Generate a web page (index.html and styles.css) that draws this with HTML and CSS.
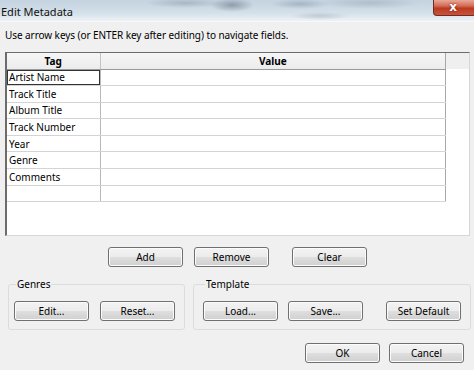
FILE: index.html
```html
<!DOCTYPE html>
<html>
<head>
	<meta charset="utf-8">
	<title>Edit Metadata</title>
	<link rel="stylesheet" href="styles.css">
</head>
<body>
	<div id="dialog">
		<div class="titlebar">
			<span class="title">Edit Metadata</span>
			<a class="close" href="javascript:;">x</a>
		</div>
		<p class="hint">Use arrow keys (or ENTER key after editing) to navigate fields.</p>
		<div class="pane">
			<table class="grid">
				<thead>
					<tr><th class="tag">Tag</th><th>Value</th></tr>
				</thead>
				<tbody>
					<tr><td class="sel">Artist Name</td><td></td></tr>
					<tr><td>Track Title</td><td></td></tr>
					<tr><td>Album Title</td><td></td></tr>
					<tr><td>Track Number</td><td></td></tr>
					<tr><td>Year</td><td></td></tr>
					<tr><td>Genre</td><td></td></tr>
					<tr><td>Comments</td><td></td></tr>
					<tr><td></td><td></td></tr>
				</tbody>
			</table>
		</div>
		<div class="row-btns">
			<button class="btn add">Add</button>
			<button class="btn remove">Remove</button>
			<button class="btn clear">Clear</button>
		</div>
		<div class="groups">
			<fieldset class="group genres">
				<legend>Genres</legend>
				<button class="btn">Edit...</button>
				<button class="btn">Reset...</button>
			</fieldset>
			<fieldset class="group template">
				<legend>Template</legend>
				<button class="btn">Load...</button>
				<button class="btn save">Save...</button>
				<button class="btn setdef">Set Default</button>
			</fieldset>
		</div>
		<div class="footer">
			<button class="btn">OK</button>
			<button class="btn cancel">Cancel</button>
		</div>
	</div>
</body>
</html>
```

FILE: styles.css
```css
*{margin: 0;padding: 0;box-sizing: border-box;}
html,body {
	width: 474px;
	height: 370px;
	overflow: hidden;
	background: #f0f0f0;
}
body {
	font: 10px/1.2 "Noto Sans", "Liberation Sans", sans-serif;
	color: #000;
}
#dialog {
	width: 474px;
	height: 370px;
}
.titlebar {
	height: 22px;
	display: flex;
	align-items: flex-start;
	background:
		radial-gradient(ellipse 22px 7px at 232px 5px, rgba(70,85,100,.45), transparent),
		radial-gradient(ellipse 40px 5px at 185px 3px, rgba(110,125,140,.35), transparent),
		radial-gradient(ellipse 30px 5px at 300px 4px, rgba(100,118,135,.35), transparent),
		radial-gradient(ellipse 50px 6px at 370px 3px, rgba(120,135,150,.3), transparent),
		radial-gradient(ellipse 30px 4px at 320px 16px, rgba(120,135,150,.3), transparent),
		linear-gradient(#c4d3e0, #d3dfe9 60%, #e4ebf1 85%, #eef2f5);
	border-bottom: 1px solid #f6f8fa;
}
.title {
	font-size: 11px;
	line-height: 24px;
	color: #111;
	padding-left: 1px;
}
.close {
	margin-left: auto;
	margin-right: -2px;
	width: 43px;
	height: 16px;
	border: 1px solid #6e2c22;
	border-top: none;
	border-radius: 0 0 4px 4px;
	background: linear-gradient(#e7a898, #d36a52 40%, #bb3a22 55%, #c8543b);
	color: #fff;
	font: bold 12px/14px "DejaVu Sans", sans-serif;
	text-align: center;
	text-decoration: none;
	text-shadow: 0 0 2px #6a1a10;
	padding-right: 3px;
}
.hint {
	padding: 7px 0 0 5px;
	height: 30px;
	line-height: 12px;
	font-size: 10px;
	letter-spacing: -0.07px;
}
.pane {
	margin-left: 5px;
	width: 465px;
	height: 184px;
	border: 1px solid #d6d6d6;
	border-top-color: #6c6c6c;
	border-left: 2px solid #6c6c6c;
	background: linear-gradient(#efefef, #efefef) top left/100% 16px no-repeat, #fff;
}
.grid {
	width: 439px;
	border-collapse: collapse;
	table-layout: fixed;
	border-right: 1px solid #a8a8a8;
	border-bottom: 1px solid #d0d0d0;
}
.grid th {
	height: 16px;
	font-weight: bold;
	background: linear-gradient(#f6f6f6, #ececec);
	border-bottom: 1px solid #9a9a9a;
	border-left: 1px solid #c4c4c4;
	text-align: center;
}
.grid th.tag {
	width: 93px;
	border-left: none;
}
.grid td {
	height: 16.6px;
	padding: 0 2px;
	border-bottom: 1px solid #d4d4d4;
	border-left: 1px solid #b8b8b8;
	white-space: nowrap;
}
.grid td:first-child {
	border-left: none;
}
.grid td.sel {
	box-shadow: inset 0 0 0 1px #333;
}
.btn {
	width: 75px;
	height: 20px;
	border: 1px solid #707070;
	border-radius: 3px;
	background: linear-gradient(#f3f3f3, #ececec 48%, #dedede 52%, #d0d0d0);
	box-shadow: inset 0 0 0 1px #fbfbfb;
	font: 10px "Noto Sans", "Liberation Sans", sans-serif;
	color: #000;
	flex: none;
}
.row-btns {
	display: flex;
	padding: 11px 0 0 108px;
	height: 42px;
}
.row-btns .remove {
	margin-left: 11px;
}
.row-btns .clear {
	margin-left: 23px;
}
.groups {
	display: flex;
	padding-left: 8px;
	height: 65px;
}
.group {
	border: 1px solid #dcdcdc;
	border-radius: 3px;
	height: 52px;
	display: flex;
	align-items: flex-start;
	padding: 11px 0 0 5px;
}
.group legend {
	padding: 0 1px;
	margin-left: 2px;
	font-size: 10px;
}
.genres {
	width: 177px;
	gap: 11px;
}
.template {
	margin-left: 8px;
	width: 278px;
	padding-left: 9px;
}
.template .save {
	margin-left: 10px;
}
.template .setdef {
	margin-left: 23px;
}
.footer {
	display: flex;
	padding-left: 305px;
}
.footer .cancel {
	margin-left: 9px;
}
```
